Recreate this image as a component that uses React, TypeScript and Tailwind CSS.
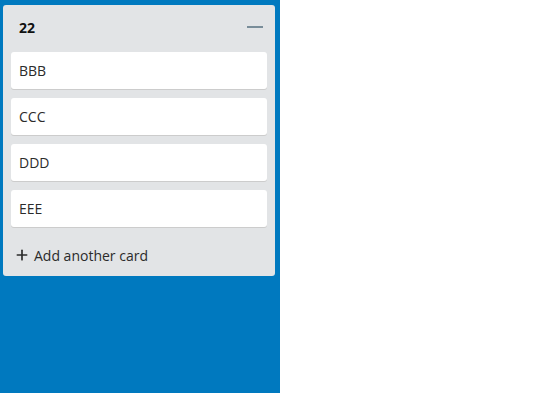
import React from 'react';
import { Plus } from 'lucide-react';

const cards = ['BBB', 'CCC', 'DDD', 'EEE'];

export default function App() {
  return (
    <div className="flex h-[393px] w-[557px] bg-white font-['Open_Sans',sans-serif]">
      <div className="h-full w-[280px] bg-[#0079bf] pl-[3px] pt-[5px]">
        <div className="w-[272px] rounded-[3px] bg-[#e2e4e6] pb-[5px]">
          {/* Header */}
          <div className="flex h-[47px] items-center justify-between pl-[16px] pr-[12px]">
            <h2 className="mb-[2px] text-[14px] font-bold text-[#111]">22</h2>
            <span className="mb-[4px] block h-[2px] w-[16px] bg-[#798d99]" />
          </div>

          {/* Cards */}
          <div className="flex flex-col gap-[8px] px-[8px]">
            {cards.map((c) => (
              <div
                key={c}
                className="mb-[1px] flex h-[37px] items-center rounded-[3px] bg-white px-[8px] text-[14px] text-[#2b2b2b] shadow-[0_1px_0_#ccc]"
              >
                {c}
              </div>
            ))}
          </div>

          {/* Add card */}
          <button className="mt-[11px] flex h-[32px] items-center gap-[4px] pl-[11px] text-[14px] text-[#2b2b2b]">
            <Plus className="h-[16px] w-[16px]" strokeWidth={2.5} />
            <span>Add another card</span>
          </button>
        </div>
      </div>
    </div>
  );
}
